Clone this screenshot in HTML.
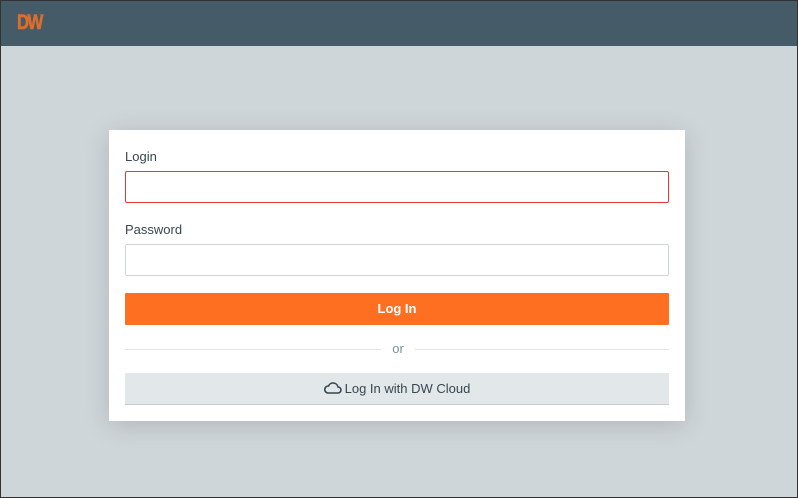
<!DOCTYPE html>
<html><head><style>
html,body{margin:0;padding:0}
body{width:798px;height:498px;overflow:hidden;background:#cfd6d9;font-family:"Liberation Sans",sans-serif;position:relative;box-sizing:border-box;border:1px solid #333}
.hdr{position:absolute;left:0;top:0;width:796px;height:45px;background:#455c68}
.logo{position:absolute;left:16px;top:10px;color:#dc6d2c;font-weight:bold;font-size:21px;letter-spacing:-2px;transform:scaleX(0.8);transform-origin:left;-webkit-text-stroke:0.6px #dc6d2c}
.card{position:absolute;left:108px;top:129px;width:576px;height:291px;background:#fff;box-shadow:0 4px 24px rgba(0,0,0,0.15)}
.lbl{position:absolute;left:16px;font-size:13px;color:#37474f}
.inp{position:absolute;left:16px;width:542px;height:30px;border:1px solid #cfd6d9;border-radius:2px}
.btn{position:absolute;left:16px;width:544px;height:32px;font-size:13px;font-weight:bold;text-align:center;line-height:32px}
</style></head><body>
<div class="hdr"><div class="logo">DW</div></div>
<div class="card">
<div class="lbl" style="top:19px">Login</div>
<div class="inp" style="top:41px;border-color:#e53935"></div>
<div class="lbl" style="top:92px">Password</div>
<div class="inp" style="top:114px"></div>
<div class="btn" style="top:163px;background:#ff6f22;color:#fff;border-radius:1px">Log In</div>
<div style="position:absolute;left:16px;top:219px;width:256px;border-top:1px solid #e0e4e6"></div>
<div style="position:absolute;left:306px;top:219px;width:254px;border-top:1px solid #e0e4e6"></div>
<div style="position:absolute;left:272px;top:211px;width:34px;text-align:center;font-size:13px;color:#78909c">or</div>
<div class="btn" style="top:243px;height:31px;background:#e2e7ea;border-bottom:1px solid #c5cdd1;color:#37474f;font-weight:normal">
<svg width="18" height="12" viewBox="0 0 18 12" style="vertical-align:-1px;margin-right:3px"><path d="M4 11h10a3 3 0 0 0 0-6 5 5 0 0 0-9.5-1A3.5 3.5 0 0 0 4 11z" fill="none" stroke="#37474f" stroke-width="1.6"/></svg>Log In with DW Cloud</div>
</div>
</body></html>
